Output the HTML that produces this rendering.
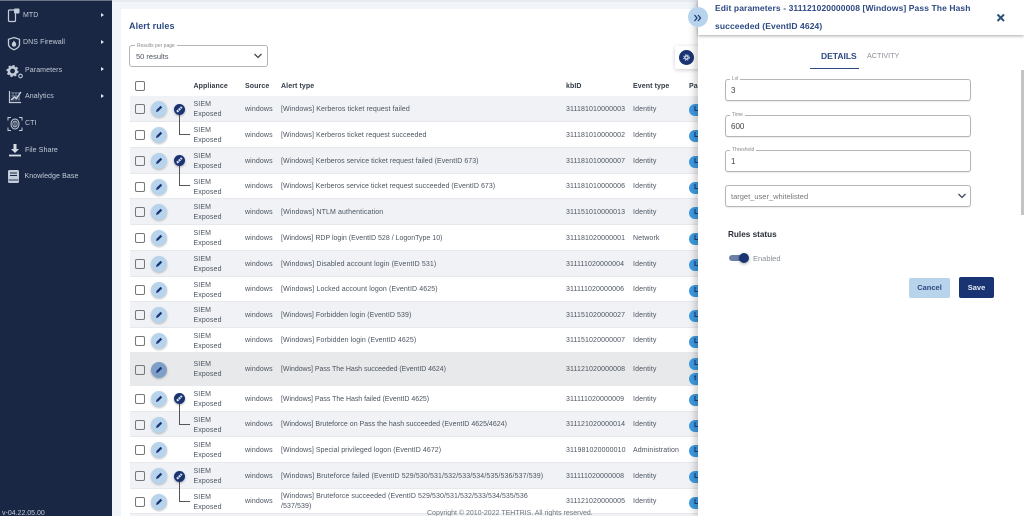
<!DOCTYPE html>
<html><head><meta charset="utf-8"><style>
html,body{margin:0;padding:0;width:1024px;height:516px;overflow:hidden;background:#f1f4f9;font-family:"Liberation Sans",sans-serif;color:#4c5561}
*{box-sizing:border-box}
.a{position:absolute}
#wrap{position:absolute;left:0;top:0;width:1024px;height:516px;overflow:hidden;filter:blur(.3px)}
#side{left:0;top:0;width:112px;height:516px;background:#1a2744}
.nav{position:absolute;font-size:7px;color:#c3ccd8;white-space:nowrap;letter-spacing:.1px}
.arr{position:absolute;left:101px;width:0;height:0;border-left:3px solid #dfe5ec;border-top:2.5px solid transparent;border-bottom:2.5px solid transparent}
.ic{position:absolute}
#card{left:121px;top:9px;width:640px;height:507px;background:#fff}
.r{position:absolute;left:130px;width:570px;overflow:hidden;box-shadow:inset 0 -1px #e6e8eb}
.g{background:#f0f2f5}.s{background:#e8e9ea}
.cb{position:absolute;left:5px;width:10px;height:10px;border:1.3px solid #777;border-radius:2px;background:#fff0}
.ed{position:absolute;left:20.5px;width:16px;height:16px;border-radius:50%;background:#b8d4ec;box-shadow:0 1px 2px rgba(0,0,0,.25)}
.ed svg{position:absolute;left:0;top:0}
.s .ed{background:#7f9fc8}
.t{position:absolute;font-size:7px;white-space:nowrap;color:#4c5561;letter-spacing:.12px;margin-top:1px}
.ap{left:63.5px;line-height:10.3px}
.so{left:115px}.ty{left:151px}.kb{left:436px}.ev{left:503px}
.p{position:absolute;left:559px;width:30px;height:12px;border-radius:6px;background:#3f9be0;color:#1a3473;font-size:7px;font-weight:bold;padding-left:5px;line-height:12px;margin-top:1px}
.lk{position:absolute;left:174px;width:11px;height:11px;border-radius:50%;background:#1a3473;box-shadow:0 1px 2px rgba(0,0,0,.3);z-index:3}
.lk svg{position:absolute;left:0;top:0}
.ln{position:absolute;left:179px;width:11px;height:26px;border-left:1px solid #555;border-bottom:1px solid #555;z-index:2}
.th{position:absolute;top:83px;font-size:7px;font-weight:bold;color:#333b46;white-space:nowrap;letter-spacing:.1px}
#panel{left:698px;top:0;width:326px;height:516px;background:#fff;box-shadow:-3px 0 7px rgba(0,0,0,.2)}
.fld{position:absolute;left:725px;width:246px;height:22px;border:1px solid #b5b5b5;border-radius:3px;background:#fff;font-size:8px;color:#444;padding:6px 0 0 5px;box-shadow:0 1px 1px rgba(0,0,0,.08)}
.lg{position:absolute;left:4px;top:-4px;background:#fff;padding:0 2px;font-size:5px;color:#888;line-height:6px}
</style></head><body><div id="wrap">

<div class="a" style="left:0;top:0;width:1024px;height:1px;background:#d4d8de"></div>
<div class="a" style="left:112px;top:0;width:586px;height:2px;background:#e6eaf1"></div>

<div id="card" class="a"></div>
<div class="a" style="left:129px;top:21px;font-size:9px;font-weight:bold;color:#2d4a82;letter-spacing:.1px">Alert rules</div>

<div class="a" style="left:129px;top:45px;width:139px;height:22px;border:1px solid #b5b5b5;border-radius:3px;background:#fff;font-size:7.5px;color:#4c5561;padding:5.5px 0 0 6px">50 results
<div class="lg" style="left:5px;top:-3px;color:#888">Results per page</div>
<svg class="a" style="left:123px;top:6px" width="10" height="8"><path d="M1.5 2l3.5 3.5L8.500 2" fill="none" stroke="#3f4a58" stroke-width="1.300"/></svg></div>

<div class="a" style="left:135px;top:81px;width:10px;height:10px;border:1.300px solid #777;border-radius:2px"></div>
<div class="th" style="left:193.500px">Appliance</div>
<div class="th" style="left:245px">Source</div>
<div class="th" style="left:281px">Alert type</div>
<div class="th" style="left:566px">kbID</div>
<div class="th" style="left:633px">Event type</div>
<div class="th" style="left:689px">Par</div>

<!-- rows -->
<div class="r g" style="top:96px;height:26px"><div class="cb" style="top:8px"></div><div class="ed" style="top:5px"><svg width="16" height="16"><path d="M5 11l.6-2.200 4-4 1.600 1.600-4 4z" fill="#1a3473"/></svg></div><div class="t ap" style="top:3px">SIEM<br>Exposed</div><div class="t so" style="top:9px">windows</div><div class="t ty" style="top:9px;letter-spacing:.1px">[Windows] Kerberos ticket request failed</div><div class="t kb" style="top:9px">311181010000003</div><div class="t ev" style="top:9px">Identity</div><div class="p" style="top:7px">L</div></div>
<div class="r" style="top:122px;height:26px"><div class="cb" style="top:8px"></div><div class="ed" style="top:5px"><svg width="16" height="16"><path d="M5 11l.6-2.200 4-4 1.600 1.600-4 4z" fill="#1a3473"/></svg></div><div class="t ap" style="top:3px">SIEM<br>Exposed</div><div class="t so" style="top:9px">windows</div><div class="t ty" style="top:9px;letter-spacing:.08px">[Windows] Kerberos ticket request succeeded</div><div class="t kb" style="top:9px">311181010000002</div><div class="t ev" style="top:9px">Identity</div><div class="p" style="top:7px">L</div></div>
<div class="r g" style="top:148px;height:26px"><div class="cb" style="top:8px"></div><div class="ed" style="top:5px"><svg width="16" height="16"><path d="M5 11l.6-2.200 4-4 1.600 1.600-4 4z" fill="#1a3473"/></svg></div><div class="t ap" style="top:3px">SIEM<br>Exposed</div><div class="t so" style="top:9px">windows</div><div class="t ty" style="top:9px;letter-spacing:.055px">[Windows] Kerberos service ticket request failed (EventID 673)</div><div class="t kb" style="top:9px">311181010000007</div><div class="t ev" style="top:9px">Identity</div><div class="p" style="top:7px">L</div></div>
<div class="r" style="top:174px;height:25px"><div class="cb" style="top:7.500px"></div><div class="ed" style="top:4.500px"><svg width="16" height="16"><path d="M5 11l.6-2.200 4-4 1.600 1.600-4 4z" fill="#1a3473"/></svg></div><div class="t ap" style="top:3px">SIEM<br>Exposed</div><div class="t so" style="top:8px">windows</div><div class="t ty" style="top:8px;letter-spacing:.045px">[Windows] Kerberos service ticket request succeeded (EventID 673)</div><div class="t kb" style="top:8px">311181010000006</div><div class="t ev" style="top:8px">Identity</div><div class="p" style="top:7px">L</div></div>
<div class="r g" style="top:199px;height:26px"><div class="cb" style="top:8px"></div><div class="ed" style="top:5px"><svg width="16" height="16"><path d="M5 11l.6-2.200 4-4 1.600 1.600-4 4z" fill="#1a3473"/></svg></div><div class="t ap" style="top:3px">SIEM<br>Exposed</div><div class="t so" style="top:9px">windows</div><div class="t ty" style="top:9px">[Windows] NTLM authentication</div><div class="t kb" style="top:9px">311151010000013</div><div class="t ev" style="top:9px">Identity</div><div class="p" style="top:7px">L</div></div>
<div class="r" style="top:225px;height:26px"><div class="cb" style="top:8px"></div><div class="ed" style="top:5px"><svg width="16" height="16"><path d="M5 11l.6-2.200 4-4 1.600 1.600-4 4z" fill="#1a3473"/></svg></div><div class="t ap" style="top:3px">SIEM<br>Exposed</div><div class="t so" style="top:9px">windows</div><div class="t ty" style="top:9px;letter-spacing:.01px">[Windows] RDP login (EventID 528 / LogonType 10)</div><div class="t kb" style="top:9px">311181020000001</div><div class="t ev" style="top:9px">Network</div><div class="p" style="top:7px">L</div></div>
<div class="r g" style="top:251px;height:26px"><div class="cb" style="top:8px"></div><div class="ed" style="top:5px"><svg width="16" height="16"><path d="M5 11l.6-2.200 4-4 1.600 1.600-4 4z" fill="#1a3473"/></svg></div><div class="t ap" style="top:3px">SIEM<br>Exposed</div><div class="t so" style="top:9px">windows</div><div class="t ty" style="top:9px">[Windows] Disabled account login (EventID 531)</div><div class="t kb" style="top:9px">311111020000004</div><div class="t ev" style="top:9px">Identity</div><div class="p" style="top:7px">L</div></div>
<div class="r" style="top:277px;height:25px"><div class="cb" style="top:7.500px"></div><div class="ed" style="top:4.500px"><svg width="16" height="16"><path d="M5 11l.6-2.200 4-4 1.600 1.600-4 4z" fill="#1a3473"/></svg></div><div class="t ap" style="top:3px">SIEM<br>Exposed</div><div class="t so" style="top:8px">windows</div><div class="t ty" style="top:8px">[Windows] Locked account logon (EventID 4625)</div><div class="t kb" style="top:8px">311111020000006</div><div class="t ev" style="top:8px">Identity</div><div class="p" style="top:7px">L</div></div>
<div class="r g" style="top:302px;height:26px"><div class="cb" style="top:8px"></div><div class="ed" style="top:5px"><svg width="16" height="16"><path d="M5 11l.6-2.200 4-4 1.600 1.600-4 4z" fill="#1a3473"/></svg></div><div class="t ap" style="top:3px">SIEM<br>Exposed</div><div class="t so" style="top:9px">windows</div><div class="t ty" style="top:9px;letter-spacing:.07px">[Windows] Forbidden login (EventID 539)</div><div class="t kb" style="top:9px">311151020000027</div><div class="t ev" style="top:9px">Identity</div><div class="p" style="top:7px">L</div></div>
<div class="r" style="top:328px;height:25px"><div class="cb" style="top:7.500px"></div><div class="ed" style="top:4.500px"><svg width="16" height="16"><path d="M5 11l.6-2.200 4-4 1.600 1.600-4 4z" fill="#1a3473"/></svg></div><div class="t ap" style="top:3px">SIEM<br>Exposed</div><div class="t so" style="top:8px">windows</div><div class="t ty" style="top:8px;letter-spacing:.095px">[Windows] Forbidden login (EventID 4625)</div><div class="t kb" style="top:8px">311151020000007</div><div class="t ev" style="top:8px">Identity</div><div class="p" style="top:7px">L</div></div>
<div class="r s" style="top:353px;height:33px"><div class="cb" style="top:11.500px"></div><div class="ed" style="top:8.500px"><svg width="16" height="16"><path d="M5 11l.6-2.200 4-4 1.600 1.600-4 4z" fill="#1a3473"/></svg></div><div class="t ap" style="top:6px">SIEM<br>Exposed</div><div class="t so" style="top:12px">windows</div><div class="t ty" style="top:12px;letter-spacing:-.04px">[Windows] Pass The Hash succeeded (EventID 4624)</div><div class="t kb" style="top:12px">311121020000008</div><div class="t ev" style="top:12px">Identity</div><div class="p" style="top:4px">L</div><div class="p" style="top:19px">t</div></div>
<div class="r" style="top:386px;height:26px"><div class="cb" style="top:8px"></div><div class="ed" style="top:5px"><svg width="16" height="16"><path d="M5 11l.6-2.200 4-4 1.600 1.600-4 4z" fill="#1a3473"/></svg></div><div class="t ap" style="top:3px">SIEM<br>Exposed</div><div class="t so" style="top:9px">windows</div><div class="t ty" style="top:9px;letter-spacing:-.035px">[Windows] Pass The Hash failed (EventID 4625)</div><div class="t kb" style="top:9px">311111020000009</div><div class="t ev" style="top:9px">Identity</div><div class="p" style="top:7px">L</div></div>
<div class="r g" style="top:412px;height:25px"><div class="cb" style="top:7.500px"></div><div class="ed" style="top:4.500px"><svg width="16" height="16"><path d="M5 11l.6-2.200 4-4 1.600 1.600-4 4z" fill="#1a3473"/></svg></div><div class="t ap" style="top:3px">SIEM<br>Exposed</div><div class="t so" style="top:8px">windows</div><div class="t ty" style="top:8px;letter-spacing:.015px">[Windows] Bruteforce on Pass the hash succeeded (EventID 4625/4624)</div><div class="t kb" style="top:8px">311121020000014</div><div class="t ev" style="top:8px">Identity</div><div class="p" style="top:7px">L</div></div>
<div class="r" style="top:437px;height:26px"><div class="cb" style="top:8px"></div><div class="ed" style="top:5px"><svg width="16" height="16"><path d="M5 11l.6-2.200 4-4 1.600 1.600-4 4z" fill="#1a3473"/></svg></div><div class="t ap" style="top:3px">SIEM<br>Exposed</div><div class="t so" style="top:9px">windows</div><div class="t ty" style="top:9px;letter-spacing:.06px">[Windows] Special privileged logon (EventID 4672)</div><div class="t kb" style="top:9px">311981020000010</div><div class="t ev" style="top:9px">Administration</div><div class="p" style="top:7px">L</div></div>
<div class="r g" style="top:463px;height:26px"><div class="cb" style="top:8px"></div><div class="ed" style="top:5px"><svg width="16" height="16"><path d="M5 11l.6-2.200 4-4 1.600 1.600-4 4z" fill="#1a3473"/></svg></div><div class="t ap" style="top:3px">SIEM<br>Exposed</div><div class="t so" style="top:9px">windows</div><div class="t ty" style="top:9px">[Windows] Bruteforce failed (EventID 529/530/531/532/533/534/535/536/537/539)</div><div class="t kb" style="top:9px">311111020000008</div><div class="t ev" style="top:9px">Identity</div><div class="p" style="top:7px">L</div></div>
<div class="r" style="top:489px;height:25px"><div class="cb" style="top:7.500px"></div><div class="ed" style="top:4.500px"><svg width="16" height="16"><path d="M5 11l.6-2.200 4-4 1.600 1.600-4 4z" fill="#1a3473"/></svg></div><div class="t ap" style="top:3px">SIEM<br>Exposed</div><div class="t so" style="top:8px">windows</div><div class="t ty" style="top:2px;line-height:10px;letter-spacing:.09px">[Windows] Bruteforce succeeded (EventID 529/530/531/532/533/534/535/536<br>/537/539)</div><div class="t kb" style="top:8px">311121020000005</div><div class="t ev" style="top:8px">Identity</div><div class="p" style="top:7px">L</div></div>
<div class="a" style="left:130px;top:514px;width:570px;height:2px;background:#f0f2f5"></div>

<!-- links -->
<div class="ln" style="top:109px"></div><div class="lk" style="top:104px"><svg width="11" height="11"><path d="M3 7.800l4.800-4.800" stroke="#dbe6f3" stroke-width="2.200" stroke-dasharray="2 .6" fill="none"/></svg></div>
<div class="ln" style="top:160px"></div><div class="lk" style="top:155px"><svg width="11" height="11"><path d="M3 7.800l4.800-4.800" stroke="#dbe6f3" stroke-width="2.200" stroke-dasharray="2 .6" fill="none"/></svg></div>
<div class="ln" style="top:399px"></div><div class="lk" style="top:393px"><svg width="11" height="11"><path d="M3 7.800l4.800-4.800" stroke="#dbe6f3" stroke-width="2.200" stroke-dasharray="2 .6" fill="none"/></svg></div>
<div class="ln" style="top:476px"></div><div class="lk" style="top:471px"><svg width="11" height="11"><path d="M3 7.800l4.800-4.800" stroke="#dbe6f3" stroke-width="2.200" stroke-dasharray="2 .6" fill="none"/></svg></div>

<div class="a" style="left:427px;top:510px;font-size:7px;color:#6f7680;letter-spacing:0;white-space:nowrap">Copyright © 2010-2022 TEHTRIS. All rights reserved.</div>

<!-- gear tab -->
<div class="a" style="left:675px;top:46px;width:30px;height:23px;background:#fff;border-radius:2px;box-shadow:0 1px 4px rgba(0,0,0,.2)"></div>
<div class="a" style="left:679px;top:50px;width:15px;height:15px;border-radius:50%;background:#1a3473"></div>
<svg class="a" style="left:683px;top:54px" width="7" height="7"><circle cx="3.500" cy="3.500" r="1.700" fill="none" stroke="#d7e2f0" stroke-width="1.300"/><circle cx="3.500" cy="3.500" r="2.900" fill="none" stroke="#d7e2f0" stroke-width=".8" stroke-dasharray="1.200 1.200"/></svg>

<!-- panel -->
<div id="panel" class="a"></div>
<div class="a" style="left:698px;top:0;width:326px;height:35px;background:#fff;box-shadow:0 1px 3px rgba(0,0,0,.35)"></div>
<div class="a" style="left:688px;top:7px;width:20px;height:20px;border-radius:50%;background:#b8d4ec"></div>
<svg class="a" style="left:693px;top:14px" width="10" height="8"><path d="M1.500 1l2.500 3-2.500 3M5 1l2.500 3L5 7" fill="none" stroke="#1f3c7c" stroke-width="1.300"/></svg>
<div class="a" style="left:715px;top:0;width:270px;font-size:8.500px;line-height:17.500px;font-weight:bold;color:#2d4a82;letter-spacing:.1px;white-space:nowrap">Edit parameters - 311121020000008 [Windows] Pass The Hash<br>succeeded (EventID 4624)</div>
<svg class="a" style="left:996px;top:13px" width="10" height="10"><path d="M1.500 1.500l6.500 6.500M8 1.500L1.500 8" stroke="#2b5279" stroke-width="2" fill="none"/></svg>

<div class="a" style="left:821px;top:51px;font-size:8.500px;font-weight:bold;color:#2d4a82">DETAILS</div>
<div class="a" style="left:810px;top:68px;width:49px;height:1px;background:#2d4a82"></div>
<div class="a" style="left:867px;top:51px;font-size:7.200px;line-height:10px;color:#8a8f96">ACTIVITY</div>
<div class="a" style="left:1021px;top:70px;width:3px;height:145px;background:#c4c4c4"></div>

<div class="fld" style="top:79px">3<div class="lg">Lvl</div></div>
<div class="fld" style="top:115px">600<div class="lg">Time</div></div>
<div class="fld" style="top:150px">1<div class="lg">Threshold</div></div>
<div class="fld" style="top:185px;color:#777;font-size:7.500px">target_user_whitelisted
<svg class="a" style="left:231px;top:6px" width="10" height="8"><path d="M1.500 2l3.500 3.500L8.500 2" fill="none" stroke="#3f4a58" stroke-width="1.300"/></svg></div>

<div class="a" style="left:728px;top:229px;font-size:8.200px;line-height:11px;font-weight:bold;color:#2a2f38">Rules status</div>
<div class="a" style="left:729px;top:255px;width:16px;height:6px;border-radius:3px;background:#6d80a8"></div>
<div class="a" style="left:739px;top:253px;width:10px;height:10px;border-radius:50%;background:#1a3473;box-shadow:0 1px 3px rgba(0,0,0,.35)"></div>
<div class="a" style="left:753px;top:254px;font-size:7.500px;color:#8a8f96">Enabled</div>

<div class="a" style="left:909px;top:278px;width:41px;height:20px;border-radius:2px;background:#b8d4ec;color:#2d4a82;font-size:7.500px;font-weight:bold;text-align:center;line-height:20px">Cancel</div>
<div class="a" style="left:959px;top:277px;width:35px;height:21px;border-radius:2px;background:#1a3473;color:#e6ecf5;font-size:7.500px;font-weight:bold;text-align:center;line-height:21px">Save</div>

<!-- sidebar -->
<div id="side" class="a"></div>
<div class="a" style="left:0;top:0;width:112px;height:1px;background:#6a7486"></div>
<svg class="ic" style="left:7px;top:7px" width="14" height="16"><rect x="1.500" y="3" width="7" height="11.500" rx="1" fill="none" stroke="#c3ccd8" stroke-width="1.200"/><rect x="7" y="1.500" width="5.500" height="5" rx="1" fill="#c3ccd8"/></svg>
<div class="nav" style="left:23px;top:11.500px">MTD</div><div class="arr" style="top:12.500px"></div>
<svg class="ic" style="left:7px;top:36px" width="14" height="15"><path d="M7 1.500l5.500 1.800v5c0 2.800-2.500 4.400-5.500 5.500-3-1.100-5.500-2.700-5.500-5.500v-5z" fill="none" stroke="#c3ccd8" stroke-width="1.300"/><path d="M7 4.500c.6 1.500 2.200 2 2.200 4 0 1.300-1 2.200-2.200 2.200s-2.200-.9-2.200-2.200c0-2 1.600-2.500 2.200-4z" fill="#c3ccd8"/></svg>
<div class="nav" style="left:23px;top:39px">DNS Firewall</div><div class="arr" style="top:39.500px"></div>
<svg class="ic" style="left:6px;top:64px" width="18" height="15"><circle cx="6.500" cy="7" r="3.700" fill="none" stroke="#c3ccd8" stroke-width="2.600"/><circle cx="6.500" cy="7" r="5.400" fill="none" stroke="#c3ccd8" stroke-width="1.300" stroke-dasharray="2.200 2"/><circle cx="14.500" cy="12" r="1.800" fill="none" stroke="#c3ccd8" stroke-width="1.100"/></svg>
<div class="nav" style="left:25px;top:66.500px">Parameters</div><div class="arr" style="top:66.500px"></div>
<svg class="ic" style="left:8px;top:90px" width="14" height="14"><path d="M1.500 1v11.500H13" fill="none" stroke="#c3ccd8" stroke-width="1.200"/><path d="M3 3h9M3 6h9M3 9h9M5 2v9M8 2v9M11 2v9" stroke="#8894a7" stroke-width=".7"/><path d="M3 10l3.500-3 2 1.500L13 2" stroke="#d5dce6" stroke-width="1.200" fill="none"/></svg>
<div class="nav" style="left:25px;top:93px">Analytics</div><div class="arr" style="top:93.500px"></div>
<svg class="ic" style="left:7px;top:116px" width="16" height="16"><path d="M1 4.500V1.500h3M12 1.500h3v3M1 11.500v3h3M12 14.500h3v-3" fill="none" stroke="#c3ccd8" stroke-width="1"/><ellipse cx="8" cy="8" rx="4" ry="5" fill="none" stroke="#c3ccd8" stroke-width="1"/><ellipse cx="8" cy="8" rx="2.200" ry="3" fill="none" stroke="#c3ccd8" stroke-width=".8"/><path d="M8 5.500v5" stroke="#c3ccd8" stroke-width=".8"/></svg>
<div class="nav" style="left:25px;top:119.500px">CTI</div>
<svg class="ic" style="left:8px;top:143px" width="14" height="14"><path d="M5.500 1h3v5h2.500L7 10 3 6h2.500z" fill="#d5dce6"/><path d="M1 12.500h12" stroke="#d5dce6" stroke-width="1.800"/></svg>
<div class="nav" style="left:25px;top:146.500px">File Share</div>
<svg class="ic" style="left:7px;top:169px" width="13" height="15"><rect x="1" y="1" width="11" height="13" rx="1.500" fill="#c3ccd8"/><path d="M3 4h7M3 6.500h7" stroke="#1a2744" stroke-width="1"/><path d="M1.500 11h10" stroke="#1a2744" stroke-width=".9"/></svg>
<div class="nav" style="left:24.500px;top:172.500px">Knowledge Base</div>
<div class="nav" style="left:2px;top:510px;color:#c3ccd8;letter-spacing:0">v-04.22.05.00</div>

</div></body></html>
